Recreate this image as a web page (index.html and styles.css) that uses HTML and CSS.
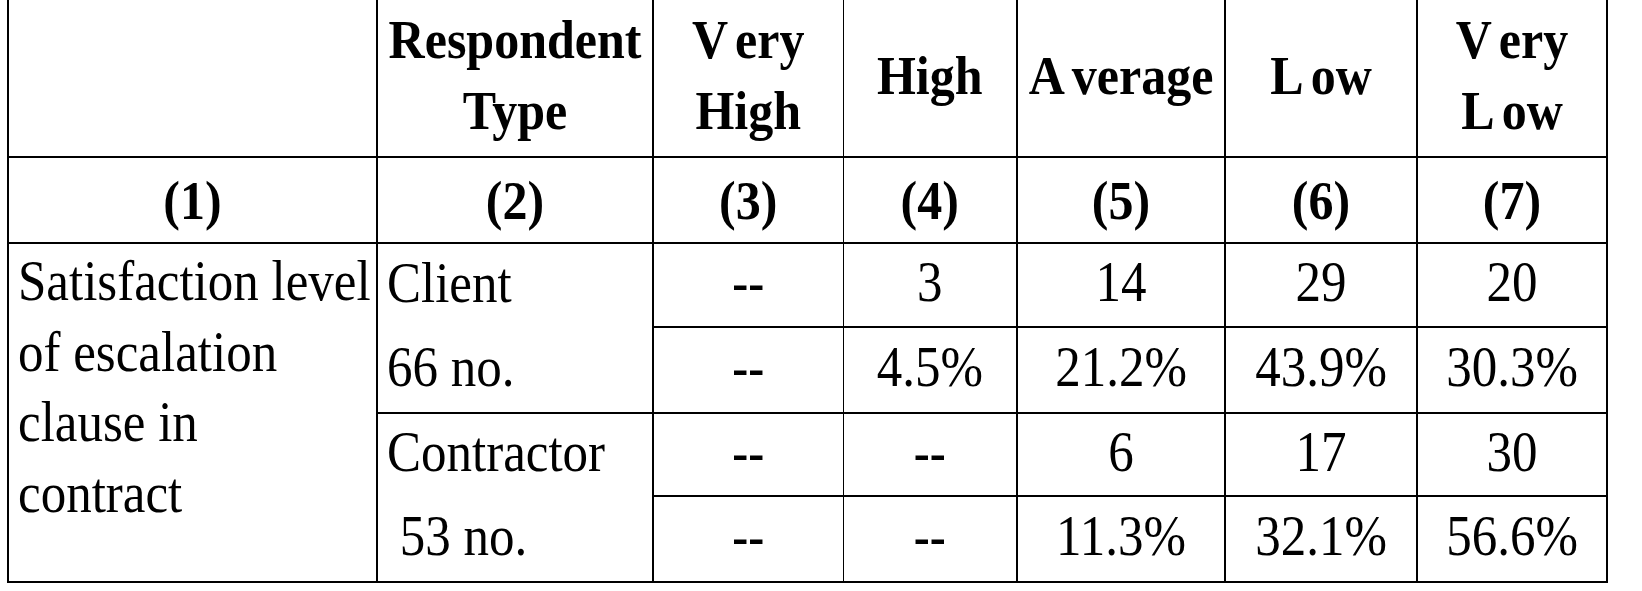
FILE: index.html
```html
<!DOCTYPE html>
<html lang="en">
<head>
  <meta charset="UTF-8" />
  <meta name="viewport" content="width=device-width, initial-scale=1.0"/>
  <title>Satisfaction level of escalation clause</title>
  <link rel="stylesheet" href="styles.css">
</head>
<body>
  <table class="survey">
    <colgroup>
      <col class="col-topic">
      <col class="col-type">
      <col class="col-vhigh">
      <col class="col-high">
      <col class="col-avg">
      <col class="col-low">
      <col class="col-vlow">
    </colgroup>

    <!-- cabecera -->
    <tr class="row-head">
      <th></th>
      <th><span class="t">Respondent<br>Type</span></th>
      <th class="thin-r"><span class="t"><span class="cap">V</span>ery<br>High</span></th>
      <th class="thin-l"><span class="t">High</span></th>
      <th><span class="t"><span class="cap">A</span>verage</span></th>
      <th><span class="t"><span class="cap">L</span>ow</span></th>
      <th><span class="t"><span class="cap">V</span>ery<br><span class="cap">L</span>ow</span></th>
    </tr>

    <!-- numeracion de columnas -->
    <tr class="row-num">
      <th><span class="t">(1)</span></th>
      <th><span class="t">(2)</span></th>
      <th class="thin-r"><span class="t">(3)</span></th>
      <th class="thin-l"><span class="t">(4)</span></th>
      <th><span class="t">(5)</span></th>
      <th><span class="t">(6)</span></th>
      <th><span class="t">(7)</span></th>
    </tr>

    <!-- cliente -->
    <tr class="row-a">
      <td class="topic" rowspan="4"><span class="t">Satisfaction level<br>of escalation<br>clause in<br>contract</span></td>
      <td class="type open-b"><span class="t">Client</span></td>
      <td class="thin-r dash"><span class="t">--</span></td>
      <td class="thin-l"><span class="t">3</span></td>
      <td><span class="t">14</span></td>
      <td><span class="t">29</span></td>
      <td><span class="t">20</span></td>
    </tr>
    <tr class="row-b">
      <td class="type"><span class="t">66 no.</span></td>
      <td class="thin-r dash"><span class="t">--</span></td>
      <td class="thin-l"><span class="t">4.5%</span></td>
      <td><span class="t">21.2%</span></td>
      <td><span class="t">43.9%</span></td>
      <td><span class="t">30.3%</span></td>
    </tr>

    <!-- contratista -->
    <tr class="row-c">
      <td class="type open-b"><span class="t">Contractor</span></td>
      <td class="thin-r dash"><span class="t">--</span></td>
      <td class="thin-l dash"><span class="t">--</span></td>
      <td><span class="t">6</span></td>
      <td><span class="t">17</span></td>
      <td><span class="t">30</span></td>
    </tr>
    <tr class="row-d">
      <td class="type"><span class="t">&nbsp;53 no.</span></td>
      <td class="thin-r dash"><span class="t">--</span></td>
      <td class="thin-l dash"><span class="t">--</span></td>
      <td><span class="t">11.3%</span></td>
      <td><span class="t">32.1%</span></td>
      <td><span class="t">56.6%</span></td>
    </tr>
  </table>
</body>
</html>
```

FILE: styles.css
```css
/*
  RESET
*/
* {
  margin: 0;
  padding: 0;
  box-sizing: border-box;
}

body {
  background: #fff;
  color: #000;
  font-family: "Liberation Serif", "Times New Roman", serif;
}

/*
  TABLA
  - bordes colapsados, ancho fijo por columna
  - la parte de arriba queda fuera de la pantalla
*/
.survey {
  border-collapse: collapse;
  table-layout: fixed;
  width: 1601px;
  margin: -8px 0 0 7px;
}

.col-topic { width: 369px; }
.col-type  { width: 276px; }
.col-vhigh { width: 190px; }
.col-high  { width: 174px; }
.col-avg   { width: 208px; }
.col-low   { width: 192px; }
.col-vlow  { width: 190px; }

.survey th,
.survey td {
  border: 2px solid #000;
  padding: 0 0 6px 0;
  text-align: center;
  vertical-align: middle;
  white-space: nowrap;
  font-size: 51px;
  font-weight: 400;
  line-height: 60px;
}

/* texto un poco estirado en vertical, como el original */
.t {
  display: inline-block;
  transform: scaleY(1.11);
}

/* Encabezados en negrita */
.survey th {
  font-weight: 700;
  font-size: 50px;
  line-height: 64px;
  padding: 0;
}

/* hueco raro tras la mayuscula (como en el original) */
.cap {
  margin-right: 7px;
}

/* alturas de fila */
.row-head { height: 164px; }
.row-num  { height: 86px; }
.row-a    { height: 84px; }
.row-b    { height: 86px; }
.row-c    { height: 83px; }
.row-d    { height: 86px; }

/* linea fina entre Very High y High */
.survey .thin-r { border-right-width: 1px; }
.survey .thin-l { border-left-width: 1px; }

/* primera columna: texto arriba, a la izquierda */
.survey .topic {
  text-align: left;
  vertical-align: top;
  line-height: 63.5px;
  padding: 3px 0 0 9px;
}

.survey .topic .t {
  transform-origin: top left;
}

/* segunda columna: sin linea entre tipo y cantidad */
.survey .type {
  text-align: left;
  padding-left: 9px;
}

.survey .type .t {
  transform-origin: left center;
}

.survey .open-b {
  border-bottom-style: hidden;
}

.survey .dash {
  font-weight: 700;
  font-size: 48px;
}
```
